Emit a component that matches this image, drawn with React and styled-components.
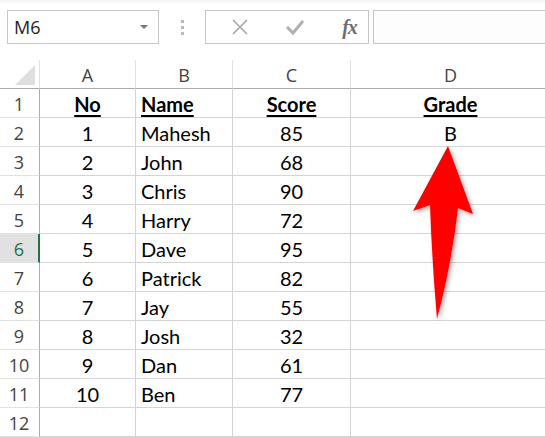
import React from 'react'
import styled, { createGlobalStyle } from 'styled-components'

const GlobalStyle = createGlobalStyle`
  html, body {
    margin: 0;
    padding: 0;
    background: #ffffff;
    overflow: hidden;
  }
  * {
    box-sizing: border-box;
  }
`

const Page = styled.div`
  position: relative;
  width: 545px;
  height: 437px;
  overflow: hidden;
  background: #ffffff;
`

const FormulaBar = styled.div`
  display: flex;
  align-items: center;
  height: 60px;
  padding: 10px 0 16px 7px;
  background: linear-gradient(#f3f3f3 0px, #ffffff 4px);
`

const NameBox = styled.div`
  width: 152px;
  height: 34px;
  border: 1px solid #c6c6c6;
  background: #ffffff;
  display: flex;
  align-items: center;
  padding-left: 6px;
  font-family: 'Open Sans', 'Noto Sans', sans-serif;
  font-size: 18px;
  color: #222;
`

const Caret = styled.span`
  margin-left: auto;
  margin-right: 10px;
  width: 0;
  height: 0;
  border-left: 4px solid transparent;
  border-right: 4px solid transparent;
  border-top: 4px solid #777;
`

const Grip = styled.div`
  width: 46px;
  height: 34px;
  display: flex;
  flex-direction: column;
  align-items: center;
  justify-content: center;
  gap: 3px;

  span {
    width: 3px;
    height: 3px;
    background: #bbbbbb;
  }
`

const ButtonBox = styled.div`
  width: 164px;
  height: 34px;
  border: 1px solid #c6c6c6;
  background: #ffffff;
  display: flex;
  align-items: center;
  padding-left: 17px;
  gap: 22px;
`

const BarIcon = styled.span`
  width: 33px;
  display: flex;
  align-items: center;
  justify-content: center;
  color: #9b9b9b;
`

const FxText = styled.span`
  font-family: 'Liberation Serif', 'DejaVu Serif', serif;
  font-style: italic;
  font-weight: bold;
  font-size: 20px;
  color: #6e6e6e;
  letter-spacing: -1px;
`

const FormulaInput = styled.div`
  flex: 1;
  height: 34px;
  margin-left: 4px;
  margin-right: -3px;
  border: 1px solid #c6c6c6;
  background: #fdfdfd;
`

const Sheet = styled.div`
  display: grid;
  grid-template-columns: 40px 96px 97px 118px 200px;
  grid-auto-rows: 29px;
`

const Cell = styled.div`
  border-right: 1px solid #d4d4d4;
  border-bottom: 1px solid #d4d4d4;
  display: flex;
  align-items: center;
  justify-content: ${(p) => (p.$align === 'left' ? 'flex-start' : 'center')};
  padding: ${(p) => (p.$align === 'left' ? '1px 0 0 5px' : '1px 0 0 0')};
  font-family: Lato, 'Open Sans', sans-serif;
  font-size: 20px;
  color: #000;
  white-space: nowrap;
  overflow: hidden;
  font-weight: ${(p) => (p.$bold ? 700 : 400)};
  text-decoration: ${(p) => (p.$bold ? 'underline' : 'none')};
  text-decoration-thickness: 2px;
  text-underline-offset: 3px;
`

const ColHead = styled.div`
  border-right: 1px solid #e1e1e1;
  border-bottom: 1px solid #ababab;
  display: flex;
  align-items: flex-end;
  justify-content: center;
  padding-bottom: 1px;
  font-family: 'Open Sans', 'Noto Sans', sans-serif;
  font-size: 18px;
  color: #444;
`

const Corner = styled.div`
  position: relative;
  border-right: 1px solid #e1e1e1;
  border-bottom: 1px solid #ababab;

  &::after {
    content: '';
    position: absolute;
    right: 4px;
    bottom: 3px;
    width: 0;
    height: 0;
    border-left: 20px solid transparent;
    border-bottom: 20px solid #dfdfdf;
  }
`

const RowHead = styled.div`
  border-right: ${(p) => (p.$active ? '2px solid #217346' : '1px solid #ababab')};
  border-bottom: 1px solid #e1e1e1;
  background: ${(p) => (p.$active ? '#e1e1e1' : '#ffffff')};
  color: ${(p) => (p.$active ? '#217346' : '#444')};
  display: flex;
  align-items: center;
  justify-content: center;
  padding: 1px ${(p) => (p.$active ? '0' : '1px')} 0 0;
  font-family: 'Open Sans', 'Noto Sans', sans-serif;
  font-size: 18px;
`

const ArrowLayer = styled.svg`
  position: absolute;
  left: 0;
  top: 0;
  pointer-events: none;
`

const rows = [
  ['No', 'Name', 'Score', 'Grade'],
  ['1', 'Mahesh', '85', 'B'],
  ['2', 'John', '68', ''],
  ['3', 'Chris', '90', ''],
  ['4', 'Harry', '72', ''],
  ['5', 'Dave', '95', ''],
  ['6', 'Patrick', '82', ''],
  ['7', 'Jay', '55', ''],
  ['8', 'Josh', '32', ''],
  ['9', 'Dan', '61', ''],
  ['10', 'Ben', '77', ''],
  ['', '', '', ''],
]

const App = () => (
  <>
    <GlobalStyle />
    <Page>
      <FormulaBar>
        <NameBox>
          M6
          <Caret />
        </NameBox>
        <Grip>
          <span />
          <span />
          <span />
        </Grip>
        <ButtonBox>
          <BarIcon>
            <svg width="18" height="18" viewBox="0 0 18 18">
              <path d="M2 2 L16 16 M16 2 L2 16" stroke="#a6a6a6" strokeWidth="1.6" fill="none" />
            </svg>
          </BarIcon>
          <BarIcon>
            <svg width="20" height="18" viewBox="0 0 20 18">
              <path d="M2 9 L8 15 L18 3" stroke="#b0b0b0" strokeWidth="3" fill="none" />
            </svg>
          </BarIcon>
          <BarIcon>
            <FxText>fx</FxText>
          </BarIcon>
        </ButtonBox>
        <FormulaInput />
      </FormulaBar>

      <Sheet>
        <Corner />
        <ColHead>A</ColHead>
        <ColHead>B</ColHead>
        <ColHead>C</ColHead>
        <ColHead>D</ColHead>
        {rows.map((r, i) => (
          <React.Fragment key={i}>
            <RowHead $active={i === 5}>{i + 1}</RowHead>
            <Cell $bold={i === 0}>{r[0]}</Cell>
            <Cell $bold={i === 0} $align="left">
              {r[1]}
            </Cell>
            <Cell $bold={i === 0}>{r[2]}</Cell>
            <Cell $bold={i === 0}>{r[3]}</Cell>
          </React.Fragment>
        ))}
      </Sheet>

      <ArrowLayer width="545" height="437" viewBox="0 0 545 437">
        <defs>
          <filter id="shade" x="-30%" y="-30%" width="160%" height="160%">
            <feDropShadow dx="2" dy="2" stdDeviation="2" floodColor="#000" floodOpacity="0.35" />
          </filter>
        </defs>
        <path
          d="M448 146 L473 214 L458 208 Q452 262 437 319 Q432 262 430 205 L413 211 Z"
          fill="#ff0000"
          filter="url(#shade)"
        />
      </ArrowLayer>
    </Page>
  </>
)

export default App
